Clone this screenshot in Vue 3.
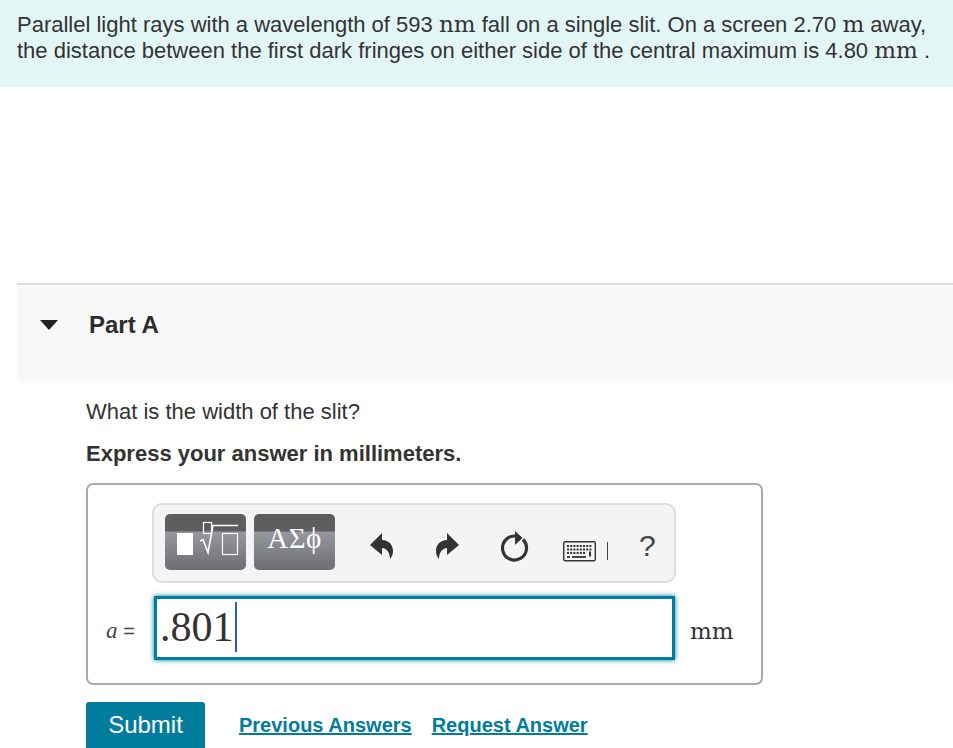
<template>
  <div class="page">
    <div class="intro">
      <p>Parallel light rays with a wavelength of 593 <span class="unit">nm</span> fall on a single slit. On a screen 2.70 <span class="unit">m</span> away,<br />the distance between the first dark fringes on either side of the central maximum is 4.80 <span class="unit">mm</span> .</p>
    </div>

    <div class="part">
      <div class="part-head">
        <span class="caret"></span>
        <h2>Part A</h2>
      </div>
      <div class="part-body">
        <p class="question">What is the width of the slit?</p>
        <p class="instruction">Express your answer in millimeters.</p>

        <div class="answer-box">
          <div class="toolbar">
            <button class="tool-btn">
              <svg width="81" height="56" viewBox="0 0 81 56">
                <rect x="12" y="19" width="16" height="22" fill="#fff" />
                <rect x="38.500" y="8.500" width="8" height="11" fill="none" stroke="#fff" stroke-width="1.200" />
                <path d="M35 27l3-1.500 5 13 5-27h25" fill="none" stroke="#fff" stroke-width="1.600" />
                <rect x="57.500" y="19.500" width="15" height="21" fill="none" stroke="#fff" stroke-width="1.200" />
              </svg>
            </button>
            <button class="tool-btn symbol">ΑΣϕ</button>

            <svg class="icon undo" width="24" height="28" viewBox="0 0 24 28">
              <path d="M0 12L12 0V7C19 7 23 12 23 18C23 21 22 24 20 26C20 20 17 15 12 15V22Z" fill="#333" />
            </svg>
            <svg class="icon redo" width="24" height="28" viewBox="0 0 24 28">
              <path d="M23 12L11 0V7C4 7 0 12 0 18C0 21 1 24 3 26C3 20 6 15 11 15V22Z" fill="#333" />
            </svg>
            <svg class="icon reset" width="28" height="32" viewBox="0 0 28 32">
              <path d="M22 8.500A12 12 0 1 1 14 5" fill="none" stroke="#333" stroke-width="3.200" />
              <path d="M14 0V14L21.500 7Z" fill="#333" />
            </svg>
            <svg class="icon keyboard" width="33" height="21" viewBox="0 0 33 21">
              <rect x="0.700" y="0.700" width="31.600" height="19" rx="1.500" fill="#f4f4f4" stroke="#333" stroke-width="1.400" />
              <path d="M4 5h25M4 8.500h25" stroke="#333" stroke-width="1.800" stroke-dasharray="2 1.200" fill="none" />
              <path d="M4 12h19" stroke="#333" stroke-width="1.800" stroke-dasharray="2 1.200" fill="none" />
              <path d="M27 10.500v5" stroke="#333" stroke-width="2" />
              <path d="M9 16h14" stroke="#333" stroke-width="1.800" />
              <path d="M4 16h3" stroke="#333" stroke-width="1.800" />
            </svg>
            <span class="sep"></span>
            <span class="help">?</span>
          </div>

          <div class="answer-row">
            <span class="label"><i>a</i> <span class="equals">=</span></span>
            <div class="math-input">.801<span class="cursor"></span></div>
            <span class="answer-unit">mm</span>
          </div>
        </div>

        <div class="actions">
          <button class="submit">Submit</button>
          <a class="link">Previous Answers</a>
          <a class="link">Request Answer</a>
        </div>
      </div>
    </div>
  </div>
</template>

<script setup>
</script>

<style>
html, body { margin: 0; background: #fff; }
</style>

<style scoped>
.page { width: 953px; height: 748px; overflow: hidden; font-family: "Liberation Sans", Arial, sans-serif; color: #333; }
.intro { height: 87px; box-sizing: border-box; padding: 12px 17px 0; background: #e3f6f6; font-size: 22px; line-height: 26px; white-space: nowrap; }
.intro p { margin: 0; }
.unit { font-family: "DejaVu Serif", serif; font-size: 23px; line-height: 20px; }

.part { margin: 196px 0 0 17px; }
.part-head { height: 80px; border-top: 2px solid #ddd; background: #f8f8f8; display: flex; align-items: center; padding: 0 0 16px 23px; }
.caret { width: 0; height: 0; border-left: 9px solid transparent; border-right: 9px solid transparent; border-top: 10px solid #222; }
.part-head h2 { margin: 0 0 0 31px; font-size: 24px; font-weight: bold; color: #2d2d2d; line-height: 26px; }

.part-body { padding: 18px 0 0 69px; }
.question { margin: 0; font-size: 22px; line-height: 26px; }
.instruction { margin: 16px 0 0; font-size: 22px; line-height: 26px; font-weight: bold; }

.answer-box { width: 677px; height: 202px; box-sizing: border-box; margin-top: 16px; border: 2px solid #aaa; border-radius: 7px; padding: 18px 0 0 64px; }
.toolbar { width: 524px; height: 80px; box-sizing: border-box; display: flex; align-items: center; border: 2px solid #ddd; border-radius: 10px; background: #f4f4f4; padding: 0 0 2px 11px; }
.tool-btn { width: 81px; height: 56px; padding: 0; margin-right: 8px; border: none; border-radius: 5px; color: #fff; background: linear-gradient(#5e5e60 0 17px, #97979f 18px, #6d6d72 100%); }
.tool-btn svg { display: block; }
.symbol { font-family: "Liberation Serif", serif; font-size: 29px; line-height: 38px; padding-bottom: 8px; letter-spacing: 0.500px; }
.icon { flex: none; display: block; }
.undo { margin: 10px 0 0 27px; }
.redo { margin: 10px 0 0 42px; }
.reset { margin: 10px 0 0 41px; }
.keyboard { margin: 19px 0 0 34px; }
.sep { width: 1px; height: 18px; background: #444; margin: 18px 0 0 11px; }
.help { margin: 8px 0 0 31px; font-size: 30px; color: #444; line-height: 30px; }

.answer-row { display: flex; align-items: center; margin: 13px 0 0 -64px; }
.label { width: 66px; box-sizing: border-box; padding-left: 18px; margin-top: 6px; font-family: "Liberation Serif", serif; font-size: 23px; color: #444; }
.equals { font-family: "Liberation Sans", sans-serif; font-size: 20px; }
.math-input { width: 521px; height: 64px; box-sizing: border-box; border: 3px solid #007c9c; box-shadow: 0 0 5px #007c9c; padding-left: 3px; font-family: "Liberation Serif", serif; font-size: 42px; line-height: 56px; color: #333; display: flex; align-items: flex-start; }
.cursor { width: 2px; height: 50px; background: #2a5cd0; margin: 3px 0 0 1px; }
.answer-unit { margin: 5px 0 0 15px; font-family: "DejaVu Serif", serif; font-size: 23px; }

.actions { display: flex; align-items: center; margin-top: 17px; }
.submit { width: 119px; height: 46px; flex: none; border: none; border-radius: 3px 3px 0 0; padding: 0; background: #007c9c; color: #fff; font-family: inherit; font-size: 24px; }
.link { color: #007c9c; font-size: 20px; font-weight: bold; text-decoration: underline; margin-left: 34px; }
.link + .link { margin-left: 20px; }
</style>
